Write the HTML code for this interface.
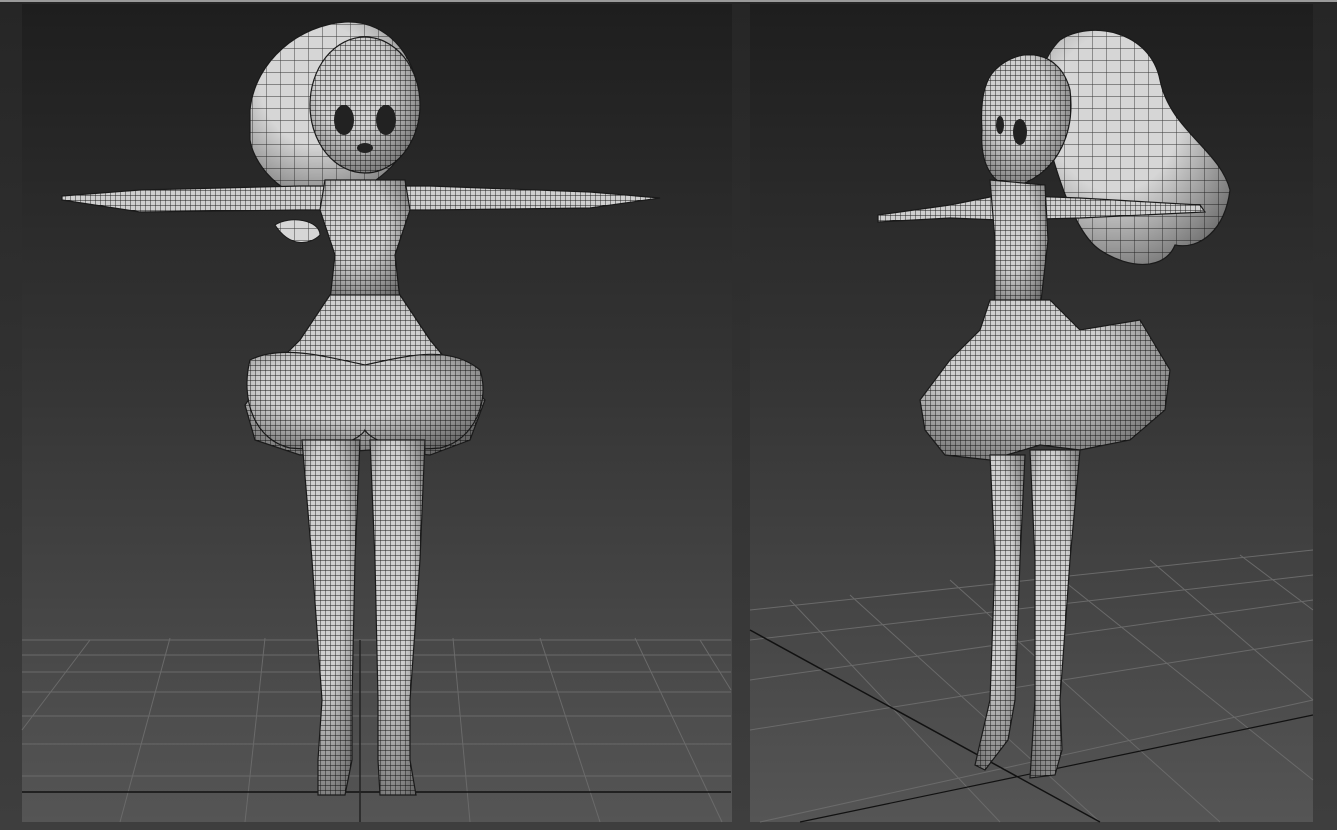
<!DOCTYPE html>
<html><head><style>
html,body{margin:0;padding:0;width:1337px;height:830px;overflow:hidden;background:#3a3a3a}
svg{display:block}
</style></head><body>
<svg width="1337" height="830" viewBox="0 0 1337 830" xmlns="http://www.w3.org/2000/svg">
<defs>
<linearGradient id="bg" x1="0" y1="0" x2="0" y2="1">
<stop offset="0" stop-color="#1e1e1e"/><stop offset="0.45" stop-color="#343434"/><stop offset="1" stop-color="#555"/>
</linearGradient>
<linearGradient id="side" x1="0" y1="0" x2="0" y2="1">
<stop offset="0" stop-color="#262626"/><stop offset="1" stop-color="#3e3e3e"/>
</linearGradient>
<pattern id="mesh" width="5" height="5" patternUnits="userSpaceOnUse">
<rect width="5" height="5" fill="#cfcfcf"/>
<path d="M0 0H5M0 0V5" stroke="#1a1a1a" stroke-width="0.9"/>
</pattern>
<pattern id="mesh2" width="14" height="12" patternUnits="userSpaceOnUse">
<rect width="14" height="12" fill="#d6d6d6"/>
<path d="M0 0H14M0 0V12" stroke="#333" stroke-width="0.9"/>
</pattern>
<radialGradient id="shade" cx="0.4" cy="0.35" r="0.75">
<stop offset="0.45" stop-color="#000" stop-opacity="0"/><stop offset="1" stop-color="#000" stop-opacity="0.5"/>
</radialGradient>
<path id="h1" d="M250 110C255 60 300 25 345 22C390 20 420 60 420 110C415 150 380 190 330 200C290 205 255 170 250 140Z"/>
<path id="e1" d="M275 225C290 215 320 220 320 235C310 245 290 248 275 225Z"/>
<path id="a1" d="M62 196L140 190L300 186L430 186L590 192L660 198L590 208L430 210L300 210L140 212L62 200Z"/>
<ellipse id="f1" cx="365" cy="105" rx="55" ry="68"/>
<path id="t1" d="M325 180L405 180L410 210L395 255L400 300L330 300L335 255L320 210Z"/>
<path id="s1" d="M330 295L400 295L430 340L455 370L485 400L470 440L430 455L370 450L300 455L255 440L245 405L270 370L300 340Z"/>
<path id="p1" d="M250 360C280 345 320 355 365 365C410 355 450 345 480 370C490 400 475 440 440 448C400 452 370 440 365 430C360 440 330 452 290 448C255 440 240 400 250 360Z"/>
<path id="l1" d="M302 440L360 440L355 560L352 700L352 760L345 795L318 795L318 760L322 700L312 560Z"/>
<path id="l2" d="M370 440L425 440L420 560L410 700L410 760L416 795L380 795L378 760L378 700L375 560Z"/>
<path id="h2" d="M1060 40C1090 20 1150 30 1160 80C1170 130 1220 150 1230 190C1225 230 1200 250 1175 245C1165 270 1130 270 1100 250C1070 230 1050 150 1040 110C1035 80 1045 55 1060 40Z"/>
<path id="a2" d="M878 215L950 205L1000 195L1080 198L1200 205L1205 212L1080 218L1000 220L950 218L878 222Z"/>
<path id="f2" d="M995 70C1020 45 1060 50 1070 90C1075 130 1060 170 1020 185C990 190 980 160 982 130C980 100 985 80 995 70Z"/>
<path id="t2" d="M990 180L1045 185L1048 240L1040 310L995 310L995 240Z"/>
<path id="s2" d="M990 300L1050 300L1080 330L1140 320L1170 370L1165 410L1130 440L1080 450L1040 445L990 460L945 455L925 430L920 400L950 360L980 330Z"/>
<path id="m1" d="M990 455L1025 455L1020 560L1015 700L1008 740L985 770L975 765L990 700L995 560Z"/>
<path id="m2" d="M1030 450L1080 450L1070 560L1060 700L1062 750L1055 775L1030 778L1035 700L1035 560Z"/>
</defs>
<rect width="1337" height="830" fill="url(#side)"/>
<rect x="0" y="0" width="1337" height="2" fill="#9a9a9a"/>
<rect x="22" y="4" width="710" height="818" fill="url(#bg)"/>
<rect x="750" y="4" width="563" height="818" fill="url(#bg)"/>
<g stroke="#6a6a6a" stroke-width="1" fill="none">
<path d="M22 640H731M22 655H731M22 672H731M22 692H731M22 716H731M22 744H731M22 776H731"/>
<path d="M170 638L120 822M265 638L245 822M453 638L470 822M540 638L600 822M635 638L722 822M90 640L22 730M700 640L731 690"/>
</g>
<path d="M22 792H731" stroke="#111" stroke-width="1.5"/>
<path d="M360 640V822" stroke="#222" stroke-width="1.5"/>
<g stroke="#6a6a6a" stroke-width="1" fill="none">
<path d="M750 610L1313 550M750 640L1313 575M750 680L1313 600M750 730L1313 640M760 822L1313 700"/>
<path d="M790 600L1000 822M850 595L1100 822M950 580L1220 822M1050 570L1313 780M1150 560L1313 700M1240 555L1313 610"/>
</g>
<path d="M750 630L1100 822" stroke="#111" stroke-width="1.5"/>
<path d="M800 822L1313 715" stroke="#111" stroke-width="1.2"/>

<!-- LEFT FIGURE -->
<use href="#h1" fill="url(#mesh2)"/><use href="#h1" fill="url(#shade)"/><use href="#h1" fill="none" stroke="#1a1a1a" stroke-width="1.2"/>
<use href="#e1" fill="url(#mesh2)" stroke="#1a1a1a"/>
<use href="#a1" fill="url(#mesh)" stroke="#1a1a1a" stroke-width="1.2"/>
<use href="#f1" fill="url(#mesh)"/><use href="#f1" fill="url(#shade)" stroke="#1a1a1a" stroke-width="1.2"/>
<use href="#t1" fill="url(#mesh)"/><use href="#t1" fill="url(#shade)" stroke="#1a1a1a" stroke-width="1.2"/>
<use href="#s1" fill="url(#mesh)"/><use href="#s1" fill="url(#shade)" stroke="#1a1a1a" stroke-width="1.2"/>
<use href="#p1" fill="url(#mesh)"/><use href="#p1" fill="url(#shade)" stroke="#1a1a1a" stroke-width="1.2"/>
<use href="#l1" fill="url(#mesh)"/><use href="#l1" fill="url(#shade)" stroke="#1a1a1a" stroke-width="1.2"/>
<use href="#l2" fill="url(#mesh)"/><use href="#l2" fill="url(#shade)" stroke="#1a1a1a" stroke-width="1.2"/>
<g fill="#222"><ellipse cx="344" cy="120" rx="10" ry="15"/><ellipse cx="386" cy="120" rx="10" ry="15"/><ellipse cx="365" cy="148" rx="8" ry="5"/></g>

<!-- RIGHT FIGURE -->
<use href="#h2" fill="url(#mesh2)"/><use href="#h2" fill="url(#shade)" stroke="#1a1a1a" stroke-width="1.2"/>
<use href="#a2" fill="url(#mesh)" stroke="#1a1a1a" stroke-width="1.2"/>
<use href="#f2" fill="url(#mesh)"/><use href="#f2" fill="url(#shade)" stroke="#1a1a1a" stroke-width="1.2"/>
<use href="#t2" fill="url(#mesh)"/><use href="#t2" fill="url(#shade)" stroke="#1a1a1a" stroke-width="1.2"/>
<use href="#s2" fill="url(#mesh)"/><use href="#s2" fill="url(#shade)" stroke="#1a1a1a" stroke-width="1.2"/>
<use href="#m1" fill="url(#mesh)"/><use href="#m1" fill="url(#shade)" stroke="#1a1a1a" stroke-width="1.2"/>
<use href="#m2" fill="url(#mesh)"/><use href="#m2" fill="url(#shade)" stroke="#1a1a1a" stroke-width="1.2"/>
<g fill="#222"><ellipse cx="1020" cy="132" rx="7" ry="13"/><ellipse cx="1000" cy="125" rx="4" ry="9"/></g>
</svg>
</body></html>
